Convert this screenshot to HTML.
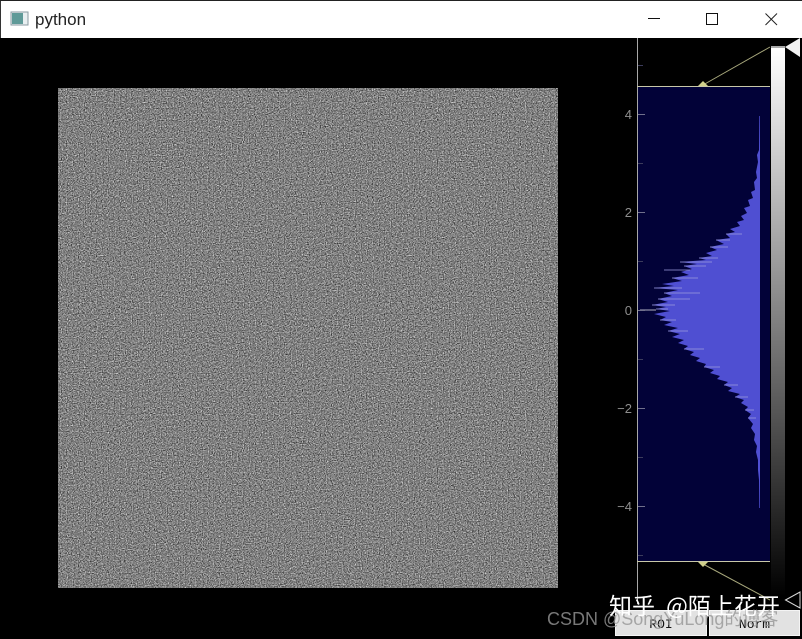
<!DOCTYPE html>
<html>
<head>
<meta charset="utf-8">
<style>
html,body{margin:0;padding:0;background:#000;}
#w{position:relative;width:802px;height:639px;overflow:hidden;background:#000;font-family:"Liberation Sans","Noto Sans CJK SC",sans-serif;}
#tb{position:absolute;left:0;top:0;width:802px;height:38px;background:#fff;border-top:1px solid #222;box-sizing:border-box;}
#title{position:absolute;left:35px;top:9px;font-size:17px;line-height:20px;color:#222;}
svg{position:absolute;left:0;top:0;}
.b{position:absolute;top:610px;height:26px;background:#e2e2e2;border:1px solid #f4f4f4;box-sizing:border-box;font-family:"Liberation Mono",monospace;font-size:13px;line-height:28px;text-align:center;color:#111;}
#csdn{position:absolute;left:547px;top:608px;font-size:18px;line-height:22px;color:rgba(150,150,150,.8);white-space:nowrap;}
#zh{position:absolute;left:609px;top:590px;font-size:23px;line-height:28px;color:#fff;white-space:nowrap;word-spacing:6px;font-family:"Noto Sans CJK SC","Liberation Sans",sans-serif;}
</style>
</head>
<body>
<div id="w">
<div id="tb"><div id="title">python</div></div>
<svg width="802" height="639" viewBox="0 0 802 639">
<defs>
<filter id="n" x="0" y="0" width="100%" height="100%" color-interpolation-filters="sRGB">
<feTurbulence type="fractalNoise" baseFrequency="0.83" numOctaves="2" seed="11"/>
<feColorMatrix type="matrix" values="0.75 0.75 0 0 -0.25 0.75 0.75 0 0 -0.25 0.75 0.75 0 0 -0.25 0 0 0 0 1"/>
<feGaussianBlur stdDeviation="0.3"/>
</filter>
<filter id="s" x="-5%" y="-5%" width="110%" height="110%"><feGaussianBlur stdDeviation="0.35"/></filter>
<linearGradient id="g" x1="0" y1="0" x2="0" y2="1">
<stop offset="0" stop-color="#fff"/><stop offset="1" stop-color="#000"/>
</linearGradient>
</defs>
<rect x="0" y="1" width="1" height="37" fill="#333"/>
<rect x="11" y="12" width="17" height="13" fill="#e8eef0" stroke="#8a9aa0"/>
<rect x="12" y="13" width="11" height="11" fill="#5f9a98"/>
<rect x="648" y="18" width="12" height="1" fill="#111"/>
<rect x="706.5" y="13.5" width="11" height="11" fill="none" stroke="#111"/>
<path d="M765.5 13.5L777 25M777 13.5L765.5 25" stroke="#222" fill="none"/>
<rect x="58" y="88" width="500" height="500" fill="#808080"/>
<rect x="58" y="88" width="500" height="500" filter="url(#n)"/>
<rect x="637" y="86" width="133" height="475" fill="#020238"/>
<g filter="url(#s)">
<polygon fill="#5050d2" points="760,116 759.3,116 759,150 757,155 758,162 756,172 757,178 754,182 755,190 751,192 753,198 748,200 750,206 744,208 747,213 741,216 744,220 737,222 740,226 730,229 735,232 726,234 730,238 716,240 724,244 710,247 717,250 706,253 712,256 699,258 706,260 680,262 697,264 684,266 692,269 681,272 689,275 672,278 682,281 662,284 674,286 654,288 678,290 664,293 672,296 658,299 668,302 652,305 666,307 656,309 670,311 654,314 666,317 660,320 672,322 664,325 678,328 668,331 680,334 672,337 684,340 678,343 688,346 684,349 694,352 690,355 700,358 696,361 706,364 704,367 714,370 710,373 720,376 717,379 728,382 724,385 732,388 728,391 740,394 735,397 744,400 741,403 748,407 745,410 751,414 748,418 753,424 751,428 755,434 754,440 757,446 756,452 758,460 758,470 759,480 759.3,508 760,508"/>
<path d="M680 262H712M654 288H682M664 293H700M652 305H675M656 309H668M658 299H690M672 278H698M664 270H690M684 266H706M660 320H676M668 331H688M684 349H704M699 258H718M710 247H728M726 234H742M716 240H730M704 367H720M724 385H738M735 397H748M748 418H756M745 410H754" stroke="#9c9cdc" stroke-width="1" fill="none" opacity=".75"/>
<path d="M640 310H656" stroke="#b0b0c0"/>
</g>
<rect x="637" y="38" width="1" height="566" fill="#a8a8a8"/>
<path d="M638 114.5H645M638 212.5H645M638 310.5H645M638 408.5H645M638 506.5H645" stroke="#70708c"/>
<path d="M638 65.5H643M638 163.5H643M638 261.5H643M638 359.5H643M638 457.5H643M638 555.5H643" stroke="#3c3c5c"/>
<g font-family="Liberation Sans, sans-serif" font-size="13" fill="#8e8e8e" text-anchor="end">
<text x="632" y="119">4</text>
<text x="632" y="217">2</text>
<text x="632" y="315">0</text>
<text x="632" y="413">−2</text>
<text x="632" y="511">−4</text>
</g>
<rect x="771" y="48" width="14" height="549" fill="url(#g)"/>
<rect x="771" y="46" width="14" height="2" fill="#a8a8a8"/>
<rect x="637" y="86" width="133" height="1" fill="#c8c8a8"/>
<rect x="637" y="561" width="133" height="1" fill="#c8c8a8"/>
<path d="M703 85L770 47M703 564L770 600" stroke="#a8a87c" stroke-width="1" fill="none"/>
<polygon points="703,81 708,86 698,86" fill="#d0d08c"/>
<polygon points="703,567 708,562 698,562" fill="#d0d08c"/>
<polygon points="785,47 800,38 800,57" fill="#f2f2f2"/>
<polygon points="785.5,600 800,592 800,608" fill="#000" stroke="#d8d8d8"/>
</svg>
<div class="b" style="left:615px;width:92px;">ROI</div>
<div class="b" style="left:709px;width:91px;">Norm</div>
<div id="csdn">CSDN @SongYuLong的博客</div>
<div id="zh">知乎 @陌上花开</div>
</div>
</body>
</html>
